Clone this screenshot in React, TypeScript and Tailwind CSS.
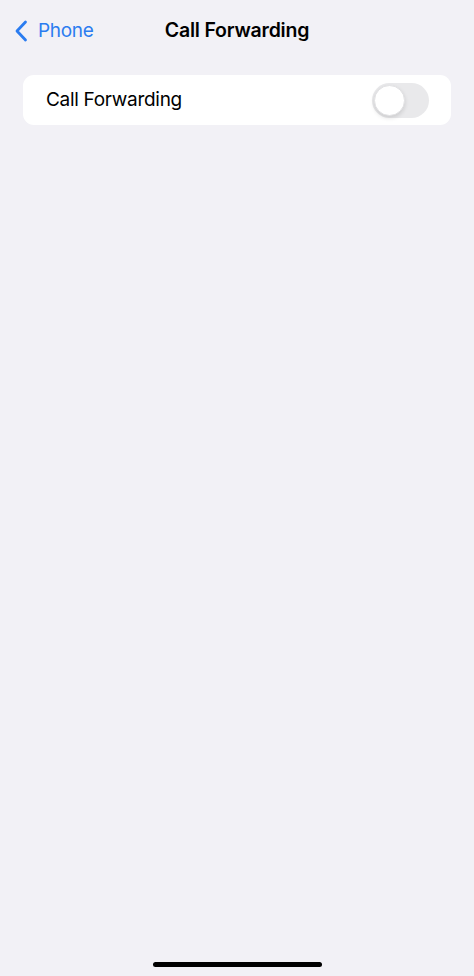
import { useState } from "react";

function Toggle({ on, onChange }: { on: boolean; onChange: (v: boolean) => void }) {
  return (
    <button
      onClick={() => onChange(!on)}
      className={`relative w-[57px] h-[35px] rounded-full transition-colors ${on ? "bg-[#34c759]" : "bg-[#e9e9eb]"}`}
    >
      <span
        className={`absolute top-[2px] h-[31px] w-[31px] rounded-full bg-white border border-[#e2e2e4] shadow-[0_2px_4px_rgba(0,0,0,0.12)] transition-all ${on ? "left-[24px]" : "left-[2px]"}`}
      />
    </button>
  );
}

export default function App() {
  const [forwarding, setForwarding] = useState(false);

  return (
    <div
      className="w-[474px] h-[976px] bg-[#f2f1f6] flex flex-col"
      style={{ fontFamily: "Inter, 'Noto Sans', sans-serif" }}
    >
      {/* nav bar */}
      <div className="relative h-[60px] pt-[2px] flex items-center">
        <div className="flex items-center gap-[10px] pl-[14px] text-[#2b7cf0]">
          <svg width="14" height="22" viewBox="0 0 14 22" fill="none">
            <path d="M11.5 2 L3 11 L11.5 20" stroke="#2b7cf0" strokeWidth="2.8" strokeLinecap="round" strokeLinejoin="round" />
          </svg>
          <span className="text-[19px] tracking-[-0.3px]">Phone</span>
        </div>
        <div className="absolute left-0 right-0 text-center text-[19.5px] font-semibold text-black tracking-[-0.2px] pointer-events-none">
          Call Forwarding
        </div>
      </div>

      {/* settings group */}
      <div className="mx-[23px] mt-[15px] h-[50px] pt-[1px] bg-white rounded-[11px] flex items-center justify-between pl-[23px] pr-[22px]">
        <span className="text-[19px] text-black tracking-[-0.3px]">Call Forwarding</span>
        <Toggle on={forwarding} onChange={setForwarding} />
      </div>

      <div className="flex-1" />

      {/* home indicator */}
      <div className="flex justify-center pb-[9px]">
        <div className="w-[169px] h-[5px] rounded-full bg-black" />
      </div>
    </div>
  );
}
